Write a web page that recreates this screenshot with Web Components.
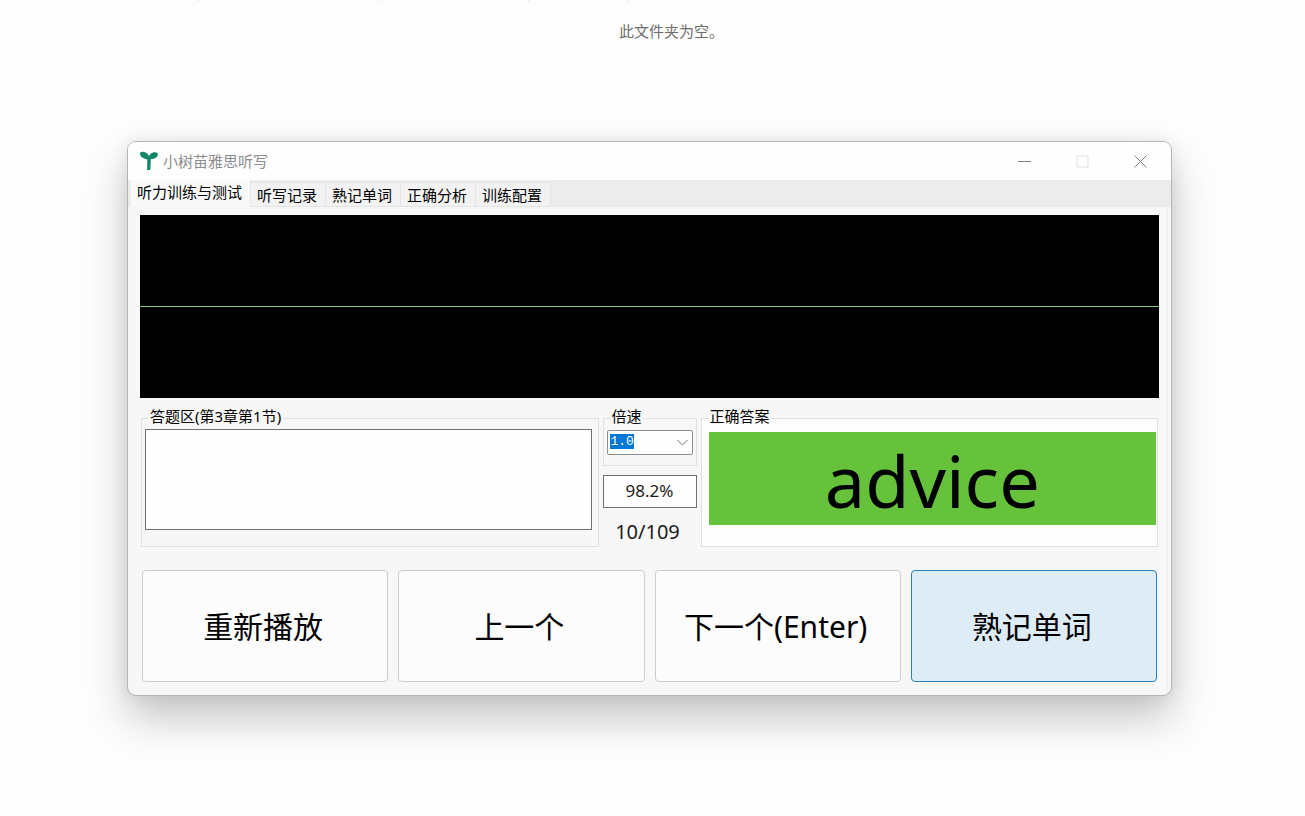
<!DOCTYPE html>
<html lang="zh-CN">
  <head>
    <meta charset="utf-8" />
    <title>小树苗雅思听写</title>
    <style>
      body {
        margin: 0;
        min-height: 100vh;
        background: #fdfdfd;
        color: #000;
        font-family: "Noto Sans", "Noto Sans CJK SC", sans-serif;
        font-size: 15px;
      }
    </style>
  </head>

  <body>
    <folder-view message="此文件夹为空。">
      <app-window caption="小树苗雅思听写">
        <tab-strip slot="tabs" tabs="听力训练与测试,听写记录,熟记单词,正确分析,训练配置"></tab-strip>
        <wave-view></wave-view>
        <training-panel word="advice" score="98.2%" progress="10/109"></training-panel>
        <button-row>
          <action-button>重新播放</action-button>
          <action-button>上一个</action-button>
          <action-button>下一个(Enter)</action-button>
          <action-button active>熟记单词</action-button>
        </button-row>
      </app-window>
    </folder-view>

    <template id="folder-template">
      <style>
        :host {
          display: block;
        }

        .columns {
          display: grid;
          grid-template-columns: 199px 180px 150px 100px;
          height: 1px;
        }

        .columns i {
          border-right: 1px solid #dcdcdc;
        }

        p {
          margin: 0;
          padding: 18px 0 0 38px;
          height: 24px;
          line-height: 24px;
          text-align: center;
          color: #6d6d6d;
        }

        .desktop {
          padding: 98px 133px 120px 127px;
        }
      </style>
      <div class="columns"><i></i><i></i><i></i><i></i></div>
      <p></p>
      <div class="desktop"><slot></slot></div>
    </template>

    <template id="window-template">
      <style>
        :host {
          display: block;
          border: 1px solid #b4b4b4;
          border-radius: 9px;
          overflow: hidden;
          background: #f7f7f7;
          box-shadow: 0 22px 42px rgba(0, 0, 0, 0.22), 0 0 18px rgba(0, 0, 0, 0.08);
        }

        header {
          display: flex;
          align-items: center;
          height: 38px;
          padding: 0 2px 0 12px;
          background: #fefefe;
          color: #8c8c8c;
        }

        .logo {
          width: 18px;
          height: 20px;
          margin-right: 5px;
        }

        .caption {
          flex: 1;
          padding-bottom: 2px;
        }

        button {
          width: 58px;
          height: 38px;
          padding: 0;
          border: 0;
          background: none;
        }

        button svg {
          display: block;
          margin: auto;
          fill: none;
          stroke: #808080;
        }

        button:disabled svg {
          stroke: #e0e0e0;
        }

        main {
          margin: 0 3px;
          padding: 8px 8px 13px 9px;
          border-right: 1px solid #ececec;
        }
      </style>
      <header>
        <svg class="logo" viewBox="0 0 18 20">
          <path fill="#12876a" d="M0 2.6C0 .9 2 .2 4.400 1c2.500.8 4 2.200 4.500 4.100C10 3 11.600 1.500 14 1.200c2.300-.3 4 .5 3.900 2.200C17.700 6.200 15 7.700 10.800 8L10.400 19H7.100L7.300 8.200C3 7.900.2 6 0 2.600z" />
        </svg>
        <span class="caption"></span>
        <button aria-label="最小化">
          <svg width="13" height="13"><path d="M0 6.500h13" /></svg>
        </button>
        <button aria-label="最大化" disabled>
          <svg width="13" height="13"><path d="M1 1h11v11H1z" /></svg>
        </button>
        <button aria-label="关闭">
          <svg width="13" height="13"><path d="M.5.5l12 12M12.500.5l-12 12" /></svg>
        </button>
      </header>
      <slot name="tabs"></slot>
      <main><slot></slot></main>
    </template>

    <template id="tabs-template">
      <style>
        :host {
          display: flex;
          align-items: flex-end;
          height: 27px;
          padding-left: 3px;
          background: #ececec;
        }

        button {
          box-sizing: border-box;
          height: 25px;
          padding: 0 8px 0 6px;
          border: 1px solid #e4e4e4;
          border-left: 0;
          background: #f2f2f2;
          color: #000;
          font: inherit;
          line-height: 22px;
        }

        button[aria-selected="true"] {
          height: 27px;
          padding: 0 8px 4px 6px;
          border-width: 0 1px 0 0;
          background: #f9f9f9;
        }
      </style>
    </template>

    <template id="wave-template">
      <style>
        :host {
          display: flex;
          align-items: center;
          height: 183px;
          background: #000;
        }

        hr {
          flex: 1;
          margin: 0;
          border: 0;
          border-top: 1px solid #84c884;
        }
      </style>
      <hr />
    </template>

    <template id="group-template">
      <style>
        :host {
          display: block;
        }

        fieldset {
          box-sizing: border-box;
          height: 100%;
          min-width: 0;
          margin: 0;
          padding: 0;
          border: 1px solid #e0e0e0;
          background: var(--group-fill, transparent);
        }

        legend {
          height: 16px;
          margin-left: 6px;
          padding: 0 2px;
          line-height: 12px;
        }
      </style>
      <fieldset>
        <legend></legend>
        <slot></slot>
      </fieldset>
    </template>

    <template id="training-template">
      <style>
        :host {
          display: grid;
          grid-template-columns: 1fr 94px 1fr;
          grid-template-rows: 137px;
          gap: 4px;
          padding: 12px 1px 0;
        }

        textarea,
        .score {
          box-sizing: border-box;
          border: 1px solid #707070;
          border-radius: 0;
          background: #fefefe;
          color: #1c1c1c;
          font: inherit;
        }

        textarea {
          display: block;
          width: calc(100% - 9px);
          height: 101px;
          margin: 3px 6px 0 3px;
          font-size: 20px;
          resize: none;
        }

        .middle group-box {
          height: 56px;
        }

        .combo {
          display: grid;
          align-items: center;
          margin: 4px 3px 0;
        }

        .combo > * {
          grid-area: 1 / 1;
        }

        select {
          height: 25px;
          padding: 0 0 3px 3px;
          appearance: none;
          border: 1px solid #8c8c8c;
          border-radius: 2px;
          background: linear-gradient(#0078d7, #0078d7) 2px 3px / 24px 15px no-repeat #fefefe;
          color: #fff;
          font: 13px "Liberation Mono", monospace;
        }

        option {
          color: #000;
        }

        .combo svg {
          justify-self: end;
          margin-right: 5px;
          fill: none;
          stroke: #707070;
          pointer-events: none;
        }

        .score {
          display: block;
          width: 100%;
          height: 33px;
          margin-top: 9px;
          padding: 0 0 2px;
          font-size: 17px;
          text-align: center;
        }

        .progress {
          display: block;
          padding-right: 4px;
          font-size: 20px;
          line-height: 48px;
          text-align: center;
          color: #1c1c1c;
        }

        .answer {
          --group-fill: #fdfdfd;
        }

        .word {
          box-sizing: border-box;
          height: 93px;
          margin: 6px 1px 0 7px;
          padding-top: 2px;
          background: #66c23a;
          font-size: 72px;
          line-height: 93px;
          text-align: center;
        }
      </style>
      <group-box label="答题区(第3章第1节)">
        <textarea aria-label="答题区"></textarea>
      </group-box>
      <div class="middle">
        <group-box label="倍速">
          <div class="combo">
            <select aria-label="倍速">
              <option>1.0</option>
            </select>
            <svg width="11" height="7"><path d="M.5 1l5 5 5-5" /></svg>
          </div>
        </group-box>
        <input class="score" aria-label="得分" readonly />
        <output class="progress"></output>
      </div>
      <group-box class="answer" label="正确答案">
        <div class="word"></div>
      </group-box>
    </template>

    <template id="row-template">
      <style>
        :host {
          display: grid;
          grid-auto-flow: column;
          grid-auto-columns: 1fr;
          gap: 10px;
          padding: 23px 2px 0;
        }
      </style>
      <slot></slot>
    </template>

    <template id="action-template">
      <style>
        :host {
          display: block;
        }

        button {
          display: block;
          width: 100%;
          height: 112px;
          padding: 0 4px 2px 0;
          border: 1px solid #cbcbcb;
          border-radius: 4px;
          background: #fcfcfc;
          color: #000;
          font: inherit;
          font-size: 30px;
        }

        :host([active]) button {
          border-color: #2a7fc0;
          background: #deecf8;
        }
      </style>
      <button><slot></slot></button>
    </template>

    <script>
      class BaseElement extends HTMLElement {
        constructor(templateId) {
          super();
          this.attachShadow({ mode: "open" });
          const template = document.getElementById(templateId);
          this.shadowRoot.appendChild(template.content.cloneNode(true));
        }

        find(selector) {
          return this.shadowRoot.querySelector(selector);
        }
      }

      class FolderView extends BaseElement {
        constructor() {
          super("folder-template");
        }

        connectedCallback() {
          this.find("p").textContent = this.getAttribute("message");
        }
      }

      class AppWindow extends BaseElement {
        constructor() {
          super("window-template");
        }

        connectedCallback() {
          this.find(".caption").textContent = this.getAttribute("caption");
        }
      }

      class TabStrip extends BaseElement {
        constructor() {
          super("tabs-template");
        }

        connectedCallback() {
          this.setAttribute("role", "tablist");
          this.getAttribute("tabs").split(",").forEach((name, index) => {
            const tab = document.createElement("button");
            tab.setAttribute("role", "tab");
            tab.setAttribute("aria-selected", index === 0);
            tab.textContent = name;
            tab.addEventListener("click", () => this.select(tab));
            this.shadowRoot.appendChild(tab);
          });
        }

        select(current) {
          this.shadowRoot.querySelectorAll("button").forEach((tab) => {
            tab.setAttribute("aria-selected", tab === current);
          });
        }
      }

      class WaveView extends BaseElement {
        constructor() {
          super("wave-template");
        }
      }

      class GroupBox extends BaseElement {
        constructor() {
          super("group-template");
        }

        connectedCallback() {
          this.find("legend").textContent = this.getAttribute("label");
        }
      }

      class TrainingPanel extends BaseElement {
        constructor() {
          super("training-template");
        }

        connectedCallback() {
          this.find(".word").textContent = this.getAttribute("word");
          this.find(".score").value = this.getAttribute("score");
          this.find(".progress").textContent = this.getAttribute("progress");
        }
      }

      class ButtonRow extends BaseElement {
        constructor() {
          super("row-template");
        }
      }

      class ActionButton extends BaseElement {
        constructor() {
          super("action-template");
        }
      }

      window.customElements.define("folder-view", FolderView);
      window.customElements.define("app-window", AppWindow);
      window.customElements.define("tab-strip", TabStrip);
      window.customElements.define("wave-view", WaveView);
      window.customElements.define("group-box", GroupBox);
      window.customElements.define("training-panel", TrainingPanel);
      window.customElements.define("button-row", ButtonRow);
      window.customElements.define("action-button", ActionButton);
    </script>
  </body>
</html>
